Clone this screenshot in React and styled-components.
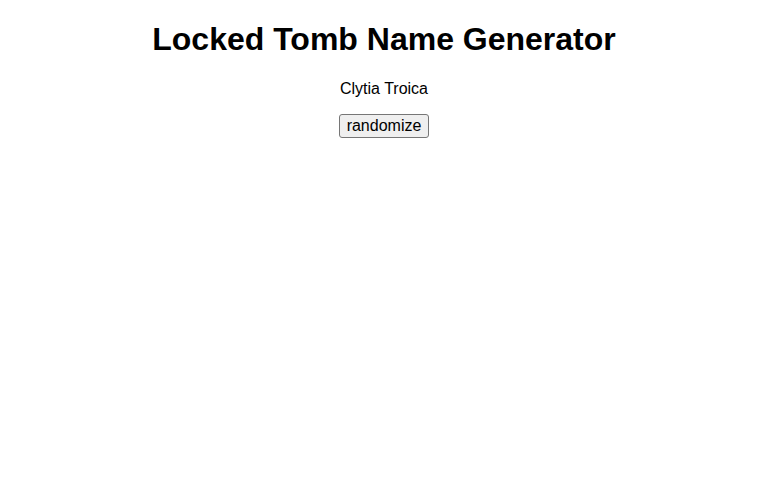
import React, { useState } from 'react';
import styled, { createGlobalStyle } from 'styled-components';

const firsts = ['Clytia', 'Ianthe', 'Coronabeth', 'Camilla', 'Palamedes', 'Harrowhark'];
const lasts = ['Troica', 'Tridentarius', 'Sextus', 'Nonagesimus', 'Hect', 'Quinn'];

const pick = (list) => list[Math.floor(Math.random() * list.length)];

const GlobalStyle = createGlobalStyle`
  body {
    margin: 0;
    background: #fff;
    color: #000;
    font-family: "Liberation Sans", Arial, sans-serif;
  }
`;

const Page = styled.div`
  text-align: center;
`;

const Title = styled.h1`
  font-size: 32px;
  font-weight: bold;
  margin: 21.44px 0;
`;

const Name = styled.p`
  font-size: 16px;
  margin: 16px 0;
`;

const Button = styled.button`
  font-family: "Liberation Sans", Arial, sans-serif;
  font-size: 16px;
  color: #000;
  background: #efefef;
  border: 1px solid #767676;
  border-radius: 3px;
  padding: 2px 7px;
  margin: 0;
`;

export default function App() {
  const [name, setName] = useState('Clytia Troica');

  return (
    <Page>
      <GlobalStyle />
      <Title>Locked Tomb Name Generator</Title>
      <Name>{name}</Name>
      <Button onClick={() => setName(`${pick(firsts)} ${pick(lasts)}`)}>randomize</Button>
    </Page>
  );
}
